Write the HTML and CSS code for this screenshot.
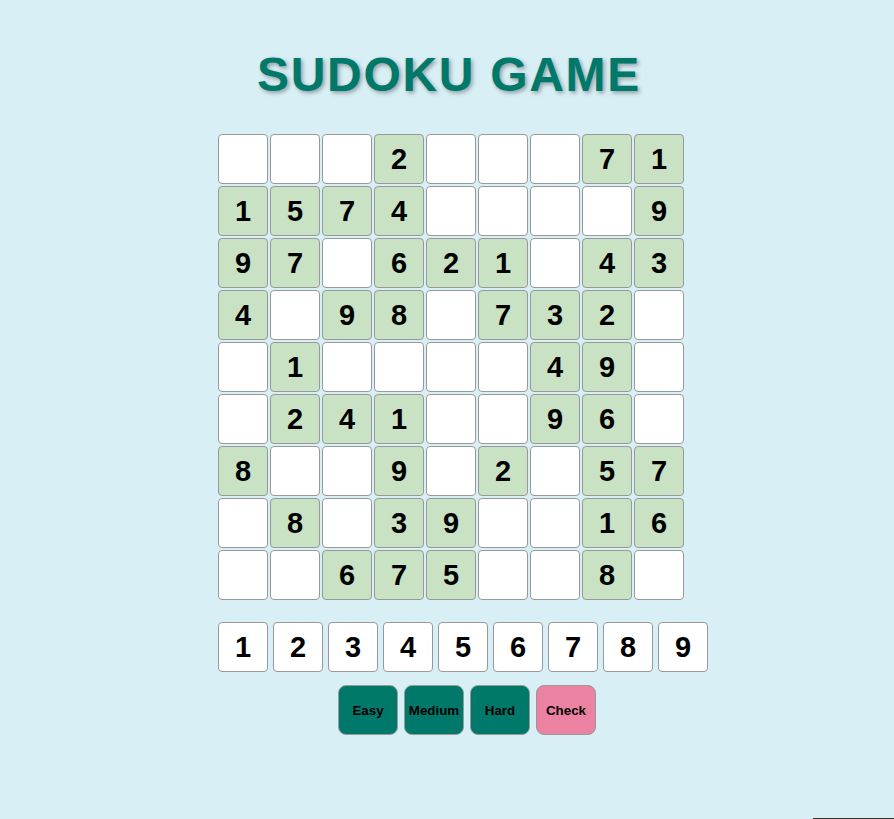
FILE: index.html
```html
<!DOCTYPE html>
<html lang="en">
<head>
<meta charset="utf-8">
<title>Sudoku Game</title>
<link rel="stylesheet" href="styles.css">
</head>
<body>
<h1 class="title">SUDOKU GAME</h1>
<div class="wrap">
  <div class="board">
    <div class="cell"></div><div class="cell"></div><div class="cell"></div><div class="cell given">2</div><div class="cell"></div><div class="cell"></div><div class="cell"></div><div class="cell given">7</div><div class="cell given">1</div>
    <div class="cell given">1</div><div class="cell given">5</div><div class="cell given">7</div><div class="cell given">4</div><div class="cell"></div><div class="cell"></div><div class="cell"></div><div class="cell"></div><div class="cell given">9</div>
    <div class="cell given">9</div><div class="cell given">7</div><div class="cell"></div><div class="cell given">6</div><div class="cell given">2</div><div class="cell given">1</div><div class="cell"></div><div class="cell given">4</div><div class="cell given">3</div>
    <div class="cell given">4</div><div class="cell"></div><div class="cell given">9</div><div class="cell given">8</div><div class="cell"></div><div class="cell given">7</div><div class="cell given">3</div><div class="cell given">2</div><div class="cell"></div>
    <div class="cell"></div><div class="cell given">1</div><div class="cell"></div><div class="cell"></div><div class="cell"></div><div class="cell"></div><div class="cell given">4</div><div class="cell given">9</div><div class="cell"></div>
    <div class="cell"></div><div class="cell given">2</div><div class="cell given">4</div><div class="cell given">1</div><div class="cell"></div><div class="cell"></div><div class="cell given">9</div><div class="cell given">6</div><div class="cell"></div>
    <div class="cell given">8</div><div class="cell"></div><div class="cell"></div><div class="cell given">9</div><div class="cell"></div><div class="cell given">2</div><div class="cell"></div><div class="cell given">5</div><div class="cell given">7</div>
    <div class="cell"></div><div class="cell given">8</div><div class="cell"></div><div class="cell given">3</div><div class="cell given">9</div><div class="cell"></div><div class="cell"></div><div class="cell given">1</div><div class="cell given">6</div>
    <div class="cell"></div><div class="cell"></div><div class="cell given">6</div><div class="cell given">7</div><div class="cell given">5</div><div class="cell"></div><div class="cell"></div><div class="cell given">8</div><div class="cell"></div>
  </div>
  <div class="pad">
    <div class="key">1</div><div class="key">2</div><div class="key">3</div><div class="key">4</div><div class="key">5</div><div class="key">6</div><div class="key">7</div><div class="key">8</div><div class="key">9</div>
  </div>
  <div class="controls">
    <button class="btn">Easy</button>
    <button class="btn">Medium</button>
    <button class="btn">Hard</button>
    <button class="btn check">Check</button>
  </div>
</div>
<div class="edge"></div>
</body>
</html>
```
FILE: styles.css
```css
html, body {
  margin: 0;
  padding: 0;
}
body {
  background: #d9eff6;
  font-family: "Liberation Sans", Arial, sans-serif;
  min-height: 819px;
  padding-top: 47px;
  box-sizing: border-box;
}
.title {
  margin: 0;
  padding-left: 4px;
  text-align: center;
  font-size: 48px;
  line-height: 56px;
  font-weight: bold;
  letter-spacing: 1.7px;
  color: #00796b;
  text-shadow: 2px 2px 4px rgba(0, 0, 0, 0.35);
}
.wrap {
  margin-top: 31px;
  margin-left: calc(50% - 229px);
  width: 498px;
  display: flex;
  flex-direction: column;
  align-items: flex-start;
}
.board {
  display: grid;
  grid-template-columns: repeat(9, 50px);
  grid-auto-rows: 50px;
  gap: 2px;
}
.cell, .key {
  box-sizing: border-box;
  width: 50px;
  height: 50px;
  background: #ffffff;
  border: 1px solid #999;
  border-radius: 4px;
  display: flex;
  align-items: center;
  justify-content: center;
  font-size: 29px;
  font-weight: bold;
  color: #000;
}
.cell.given {
  background: #c9e2c3;
}
.pad {
  margin-top: 22px;
  display: flex;
  gap: 5px;
}
.controls {
  align-self: center;
  margin-top: 13px;
  display: flex;
  gap: 6px;
}
.btn {
  box-sizing: border-box;
  width: 60px;
  height: 50px;
  padding: 0;
  border: 1px solid #999;
  border-radius: 8px;
  background: #00796b;
  color: #000;
  font-family: "Liberation Sans", Arial, sans-serif;
  font-size: 13.333px;
  font-weight: bold;
}
.btn.check {
  background: #ec82a1;
}
.edge {
  position: fixed;
  right: 0;
  bottom: 0;
  width: 81px;
  height: 1px;
  background: #333;
}
```
